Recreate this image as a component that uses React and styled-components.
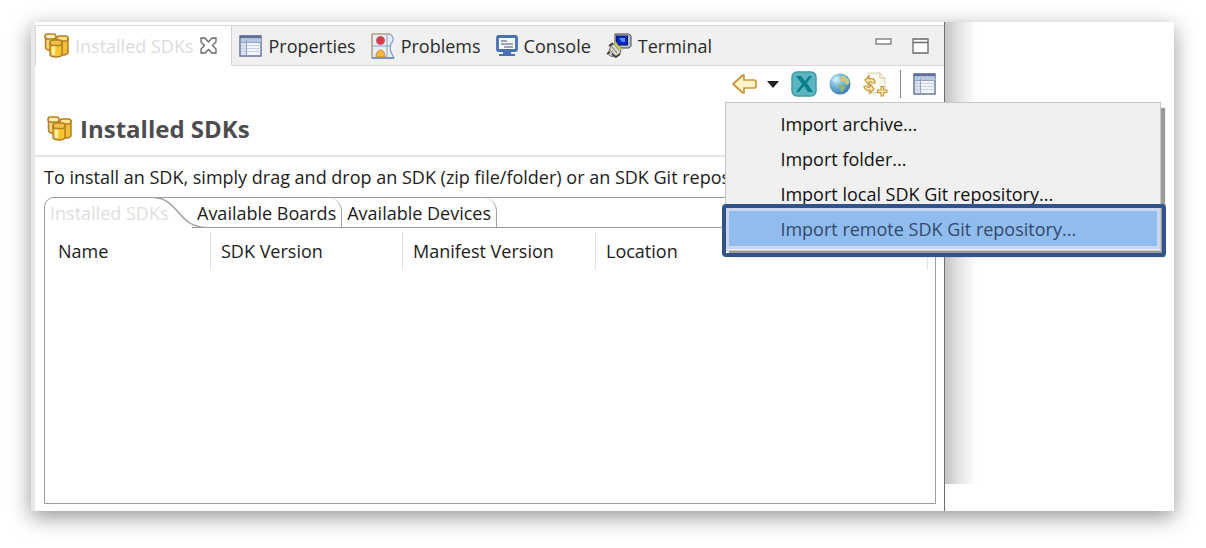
import styled, { createGlobalStyle } from "styled-components";

const GlobalStyle = createGlobalStyle`
  * {
    box-sizing: border-box;
  }
  body {
    margin: 0;
    background: #ffffff;
    color: #1c1c1c;
    font-family: "Open Sans", "Noto Sans", sans-serif;
    font-size: 18px;
    line-height: 24px;
    overflow-x: hidden;
  }
  button {
    font: inherit;
    color: inherit;
    background: none;
    border: none;
    padding: 0;
    margin: 0;
    white-space: nowrap;
  }
  svg {
    display: block;
    flex-shrink: 0;
  }
`;

const Frame = styled.main`
  display: flex;
  margin: 22px 32px 37px 31px;
  background: #ffffff;
  box-shadow: 0 6px 20px rgba(0, 0, 0, 0.42);
`;
const View = styled.section`
  flex: 1;
  min-width: 0;
  padding-top: 3px;
  border-left: 4px solid #e8e8e8;
  border-right: 1px solid #6e6e6e;
`;
const Backdrop = styled.div`
  width: 20%;
  height: 462px;
  background: linear-gradient(to right, #c4c4c4, #e4e4e4 14px, #ffffff 32px);
`;

const ViewTabs = styled.div`
  display: flex;
  height: 41px;
  background: #f0f0f0;
  border-top: 1px solid #d8d8d8;
  border-left: 1px solid #d8d8d8;
`;
const ViewTab = styled.button`
  display: flex;
  align-items: center;
  gap: 6px;
  padding: ${({ $active }) => ($active ? "0 14px 0 8px" : "0 8px 0 7px")};
  color: ${({ $active }) => ($active ? "#dcdcdc" : "#2a2a2a")};
  background: ${({ $active }) => ($active ? "#ffffff" : "transparent")};
  border-right: ${({ $active }) => ($active ? "1px solid #d0d0d0" : "none")};
  border-bottom: 1px solid ${({ $active }) => ($active ? "#ffffff" : "#d8d8d8")};
`;
const WindowButtons = styled.div`
  display: flex;
  flex: 1;
  justify-content: flex-end;
  align-items: center;
  gap: 20px;
  padding-right: 15px;
  border-bottom: 1px solid #d8d8d8;
`;

const Toolbar = styled.div`
  display: flex;
  justify-content: flex-end;
  align-items: center;
  gap: 12px;
  height: 36px;
  padding-right: 8px;
`;
const BackGroup = styled.div`
  position: relative;
  display: flex;
  align-items: center;
  gap: 10px;
  height: 36px;
`;
const Separator = styled.div`
  width: 1px;
  height: 28px;
  background: #8c8c8c;
`;

const Menu = styled.div`
  position: absolute;
  z-index: 2;
  top: 100%;
  left: -7px;
  width: 436px;
  padding: 3px 3px 4px;
  background: #f0f0f0;
  border: 1px solid #c6c6c6;
  box-shadow: 4px 6px 1px #9a9a9a;
`;
const MenuItem = styled.button`
  display: block;
  width: 100%;
  height: 35px;
  padding-left: 51px;
  text-align: left;
  color: ${({ $selected }) => ($selected ? "#33486b" : "#111111")};
  background: ${({ $selected }) => ($selected ? "#91bdee" : "transparent")};
  box-shadow: ${({ $selected }) => ($selected ? "0 0 0 3px #cbd7ee" : "none")};
`;
const Callout = styled.div`
  position: absolute;
  left: -4px;
  right: -6px;
  bottom: -7px;
  height: 53px;
  border: 4px solid #32528a;
  border-radius: 4px;
  pointer-events: none;
`;

const Heading = styled.h1`
  display: flex;
  align-items: center;
  gap: 8px;
  height: 55px;
  margin: 0;
  padding: 0 12px;
  color: #4d4d50;
  font-size: 24px;
  font-weight: 700;
  line-height: 32px;
  border-bottom: 2px solid #e6e6e6;
`;
const Hint = styled.p`
  margin: 0;
  padding: 8px 9px;
  overflow: hidden;
  white-space: nowrap;
`;

const Folder = styled.div`
  height: 307px;
  margin: 0 8px 7px 9px;
  border: 1px solid #9d9d9d;
  border-top-left-radius: 10px;
`;
const FolderTabs = styled.div`
  display: flex;
  height: 30px;
`;
const FolderTab = styled.button`
  position: relative;
  padding: 0 5px;
  border-right: 1px solid #a0a0a0;
  border-bottom: 1px solid #9d9d9d;
  border-top-right-radius: 12px 14px;
`;
const ActiveFolderTab = styled.button`
  position: relative;
  width: 147px;
  padding: 0 5px;
  text-align: left;
  color: #dedede;
`;
const TabCurve = styled.svg`
  position: absolute;
  top: -1px;
  right: -14px;
`;
const TabsRest = styled.div`
  flex: 1;
  border-bottom: 1px solid #9d9d9d;
`;

const Table = styled.table`
  width: 100%;
  padding: 4px 7px 0 0;
  table-layout: fixed;
  border-spacing: 0;
`;
const Th = styled.th`
  width: ${({ $width }) => $width || "auto"};
  height: 38px;
  padding: 0 10px;
  padding-left: ${({ $first }) => ($first ? "13px" : "10px")};
  text-align: left;
  font-weight: 400;
  white-space: nowrap;
  border-right: 1px solid #e2e2e2;
`;

const SdkIcon = () => (
  <svg width="25" height="25" viewBox="0 0 25 25" stroke="#b57f22" strokeWidth="1.500">
    <path d="M1.500 4v10q0 3 4 3h6V4z" fill="#f3d27a" />
    <rect x="1" y="1" width="11" height="5" rx="2.400" fill="#faecb9" />
    <path d="M14 5v15q2 2 5 2 5 0 5-3V5z" fill="#f2bd38" />
    <rect x="13" y="3" width="11" height="5" rx="2.400" fill="#fbe38c" />
    <path d="M6 10v11q0 3 6 3t6-3V10z" fill="#f6c52f" />
    <path d="M9.500 12v10" stroke="#fff0a0" strokeWidth="3.500" />
    <rect x="6" y="7" width="12" height="5.500" rx="2.700" fill="#eec048" />
  </svg>
);

const CloseIcon = () => (
  <svg width="18" height="17" viewBox="-1 0 18 17" fill="#fff" stroke="#666" strokeWidth="1.300">
    <path d="M1 1h4l3.500 4L12 1h4v4l-3.500 3.500L16 12v4h-4l-3.500-3.500L5 16H1v-4l3.500-3.500L1 5z" />
  </svg>
);

const TableIcon = () => (
  <svg width="23" height="22" viewBox="0 0 23 22">
    <rect x="1" y="1" width="21" height="20" fill="#f2f5fc" stroke="#66769a" strokeWidth="1.500" />
    <path d="M1 .500h21v3H1z" fill="#5f7199" />
    <path d="M2 3.500h20V7H2z" fill="#b9c8e2" />
    <path d="M2 7h5v13H2z" fill="#dae3f4" />
    <path d="M2 10.500h20M2 13.500h20M2 16.500h20" stroke="#c6d0e3" />
    <path d="M2 7.500h20M7.500 5v15" stroke="#93a4c4" />
  </svg>
);

const ProblemsIcon = () => (
  <svg width="24" height="26" viewBox="0 0 24 26">
    <path
      d="M1 1h18c4 3 4 6 1 10-2 5 0 9 3 14H1z"
      fill="#e6edf7"
      stroke="#839bc2"
      strokeWidth="1.200"
    />
    <path d="M1 1h18M1 1v24" stroke="#c7a262" />
    <path d="M1 13h18M16 1v24" stroke="#8ba6ce" />
    <circle cx="9.500" cy="7.500" r="4" fill="#dc3a43" stroke="#be5962" />
    <path d="M5 24c0-4 2-7 4.500-7s4.500 3 4.500 7z" fill="#f6b544" stroke="#d18925" />
    <path d="M1 25h22" stroke="#6f86b2" strokeWidth="1.500" />
  </svg>
);

const ConsoleIcon = () => (
  <svg width="22" height="22" viewBox="0 0 22 22">
    <rect x="1.500" y="1.500" width="19" height="14" rx="1" fill="#f7f9fd" stroke="#4a72b3" strokeWidth="2.800" />
    <path d="M5 6h6M5 9h12M8 12h9" stroke="#42536f" strokeWidth="1.200" />
    <path d="M7 17h8v2h4v2H3v-2h4z" fill="#4a72b3" />
  </svg>
);

const TerminalIcon = () => (
  <svg width="26" height="25" viewBox="0 0 26 25">
    <path d="M9 1h14l2 2v10l-2 2H9z" fill="#b9c0c6" stroke="#3f464c" />
    <rect x="10.500" y="3" width="11" height="9" fill="#0b26c7" stroke="#0a1b6b" />
    <path d="M13 5h6v4h-3z" fill="#4f8dff" />
    <path d="M2 20l3-7 5-3 5 6-1 5-4 3-6-1z" fill="#d8d6ca" stroke="#55544e" strokeWidth=".8" />
    <path d="M6 14l5 6M4 17l4 5M9 12l4 5" stroke="#77756c" />
    <path d="M9 9l3 5 3 2" fill="none" stroke="#c9cc45" strokeWidth="2" />
    <path d="M6 21l4 3 4-3M1 21l3-2M3 13l4-3" fill="none" stroke="#3b3a36" strokeWidth="1.600" />
  </svg>
);

const MinimizeIcon = () => (
  <svg width="17" height="18" viewBox="0 0 17 18">
    <rect x="1" y="2" width="15" height="5" fill="#fff" stroke="#777" strokeWidth="1.300" />
  </svg>
);

const MaximizeIcon = () => (
  <svg width="17" height="16" viewBox="0 0 17 16">
    <path d="M1 1h15v14H1zM1 4.500h15" fill="#fff" stroke="#686868" strokeWidth="1.300" />
  </svg>
);

const BackIcon = () => (
  <svg width="25" height="20" viewBox="0 0 25 20">
    <path
      d="M1 10l10-9h1v5h10q2 0 2 2v4q0 2-2 2H12v5h-1z"
      fill="#fff3c8"
      stroke="#c8963a"
      strokeWidth="1.700"
      strokeLinejoin="round"
    />
  </svg>
);

const ArrowIcon = () => (
  <svg width="12" height="7" viewBox="0 0 12 7">
    <path d="M0 0h12L6 7z" fill="#222" />
  </svg>
);

const XpressoIcon = () => (
  <svg width="26" height="26" viewBox="0 0 26 26">
    <rect x="1" y="1" width="24" height="24" rx="5" fill="#5cb6bf" stroke="#3f9ca7" strokeWidth="1.500" />
    <path d="M5 5h5l4 5 4-5h3l-5 7 6 9h-5l-4-6-5 6H5l6-8z" fill="#087f8a" />
  </svg>
);

const GlobeIcon = () => (
  <svg width="22" height="22" viewBox="0 0 22 22">
    <defs>
      <radialGradient id="globe" cx=".35" cy=".3" r=".75">
        <stop offset="0" stopColor="#cce9f5" />
        <stop offset=".5" stopColor="#6bb0d4" />
        <stop offset="1" stopColor="#3a78ab" />
      </radialGradient>
    </defs>
    <circle cx="11" cy="11" r="10.500" fill="url(#globe)" />
    <path d="M11 5l4-3 5 5v4l-3 1-2-3-4-1z" fill="#c6ca88" />
    <path d="M9 11l5 1 2 2-3 6-2-4z" fill="#92b57c" />
    <path d="M3 7l4-4 3 2-4 5z" fill="#d6edf2" opacity=".7" />
  </svg>
);

const RefreshIcon = () => (
  <svg width="25" height="25" viewBox="0 0 25 25" fill="none">
    <path d="M5 1h12l5 5v15H5z" fill="#fbfaf0" stroke="#d8cfae" />
    <path d="M17 1v5h5" stroke="#cfc291" />
    <g stroke="#c8953a" strokeWidth="1.200" fill="#fdeeb5">
      <path d="M2 8l4-4v3c4-1 6 0 6 4H9c0-1-1-2-3-1v3z" />
      <path d="M11 17l-4 4v-3c-4 1-6-1-6-4h3c0 1 1 2 3 1v-3z" />
      <path d="M18 14.500h2.500V18H24v2.500h-3.500V24H18v-3.500h-3.500V18H18z" />
    </g>
  </svg>
);

const viewTabs = [
  { label: "Properties", icon: <TableIcon /> },
  { label: "Problems", icon: <ProblemsIcon /> },
  { label: "Console", icon: <ConsoleIcon /> },
  { label: "Terminal", icon: <TerminalIcon /> },
];

const menuItems = [
  "Import archive...",
  "Import folder...",
  "Import local SDK Git repository...",
  "Import remote SDK Git repository...",
];

const App = () => {
  return (
    <>
      <GlobalStyle />
      <Frame>
        <View>
          <ViewTabs>
            <ViewTab $active>
              <SdkIcon />
              Installed SDKs
              <CloseIcon />
            </ViewTab>
            {viewTabs.map((tab) => (
              <ViewTab key={tab.label}>
                {tab.icon}
                {tab.label}
              </ViewTab>
            ))}
            <WindowButtons>
              <button aria-label="Minimize">
                <MinimizeIcon />
              </button>
              <button aria-label="Maximize">
                <MaximizeIcon />
              </button>
            </WindowButtons>
          </ViewTabs>
          <Toolbar>
            <BackGroup>
              <button aria-label="Import">
                <BackIcon />
              </button>
              <button aria-label="Import options">
                <ArrowIcon />
              </button>
              <Menu>
                {menuItems.map((item, i) => (
                  <MenuItem key={item} $selected={i === 3}>
                    {item}
                  </MenuItem>
                ))}
                <Callout />
              </Menu>
            </BackGroup>
            <button aria-label="MCUXpresso">
              <XpressoIcon />
            </button>
            <button aria-label="Web">
              <GlobeIcon />
            </button>
            <button aria-label="Refresh">
              <RefreshIcon />
            </button>
            <Separator />
            <button aria-label="Table view">
              <TableIcon />
            </button>
          </Toolbar>
          <Heading>
            <SdkIcon />
            Installed SDKs
          </Heading>
          <Hint>
            To install an SDK, simply drag and drop an SDK (zip file/folder) or an SDK Git repository
          </Hint>
          <Folder>
            <FolderTabs>
              <ActiveFolderTab>
                Installed SDKs
                <TabCurve width="52" height="31" viewBox="0 0 52 31">
                  <path d="M0 .5C12 1 18 8 25 16S38 30 52 30.500" fill="none" stroke="#9d9d9d" strokeWidth="1.300" />
                </TabCurve>
              </ActiveFolderTab>
              <FolderTab>Available Boards</FolderTab>
              <FolderTab>Available Devices</FolderTab>
              <TabsRest />
            </FolderTabs>
            <Table>
              <thead>
                <tr>
                  <Th $width="166px" $first>
                    Name
                  </Th>
                  <Th $width="192px">SDK Version</Th>
                  <Th $width="193px">Manifest Version</Th>
                  <Th>Location</Th>
                </tr>
              </thead>
            </Table>
          </Folder>
        </View>
        <Backdrop />
      </Frame>
    </>
  );
};

export default App;
